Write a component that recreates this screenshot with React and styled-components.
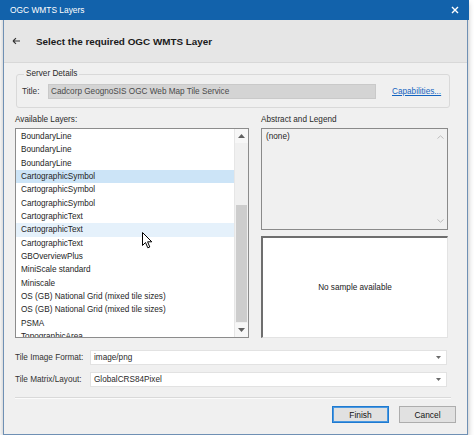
import React from "react";
import styled, { createGlobalStyle } from "styled-components";

const GlobalStyle = createGlobalStyle`
  html, body { margin: 0; padding: 0; background: #ffffff; }
  body { font-family: "Liberation Sans", Arial, sans-serif; font-size: 8.2px; color: #1b1b1b; }
  * { box-sizing: border-box; }
`;

const Window = styled.div`
  width: 465px;
  margin-left: 3px;
  border: 1px solid #6f90b4;
  border-top: none;
  background: #f0f0f0;
  box-shadow: 0 3px 6px rgba(0, 0, 0, 0.28);
  display: flex;
  flex-direction: column;
`;

const TitleBar = styled.div`
  height: 20px;
  margin: 0 -2px 0 -4px;
  background: #1262ab;
  color: #ffffff;
  display: flex;
  align-items: center;
  justify-content: space-between;
  padding: 0 10px 0 10px;
  font-size: 8.4px;
`;

const Header = styled.div`
  height: 43px;
  background: #e6e6e6;
  border-bottom: 1px solid #d8d8d8;
  display: flex;
  align-items: center;
  padding-left: 8px;
  gap: 8px;
`;

const HeaderText = styled.span`
  font-weight: bold;
  font-size: 9.9px;
  color: #1a1a1a;
`;

const Content = styled.div`
  padding: 6px 17px 11px 11px;
  display: flex;
  flex-direction: column;
`;

const GroupBox = styled.fieldset`
  margin: 0 0 0 1px;
  min-width: 0;
  border: 1px solid #d9d9d9;
  border-radius: 3px;
  padding: 5px 7px 8px 5px;
`;

const Legend = styled.legend`
  padding: 0 2px;
  margin-left: 2px;
  line-height: 10px;
  font-size: 8.2px;
  color: #2a2a2a;
`;

const TitleRow = styled.div`
  display: flex;
  align-items: center;
  height: 15px;
`;

const FieldLabel = styled.span`
  width: ${(p) => p.$w}px;
  flex: none;
  color: #333;
`;

const ReadOnlyInput = styled.div`
  width: 328px;
  height: 15px;
  background: #d4d4d4;
  border: 1px solid #c9c9c9;
  color: #4a4a4a;
  display: flex;
  align-items: center;
  padding-left: 2px;
`;

const Link = styled.a`
  margin-left: 16px;
  color: #1464c0;
  text-decoration: underline;
  cursor: pointer;
`;

const Columns = styled.div`
  display: grid;
  grid-template-columns: 234px 187px;
  column-gap: 12px;
  margin-top: 7px;
`;

const Column = styled.div`
  display: flex;
  flex-direction: column;
`;

const SectionLabel = styled.div`
  line-height: 10px;
  height: 10px;
  margin-bottom: 3px;
  color: #2a2a2a;
`;

const ListBox = styled.div`
  position: relative;
  height: 210px;
  border: 1px solid #8c8c8c;
  background: #ffffff;
  display: flex;
`;

const Rows = styled.div`
  flex: 1;
  overflow: hidden;
  padding-top: 1px;
`;

const Row = styled.div`
  height: 13.35px;
  line-height: 13.35px;
  padding-left: 5px;
  white-space: nowrap;
  color: #1e1e1e;
  background: ${(p) => (p.$state === "sel" ? "#cce4f7" : p.$state === "hover" ? "#e5f1fb" : "transparent")};
`;

const ScrollBar = styled.div`
  width: 14px;
  flex: none;
  background: #f0f0f0;
  border-left: 1px solid #e6e6e6;
  display: flex;
  flex-direction: column;
`;

const ScrollButton = styled.div`
  height: 14px;
  flex: none;
  background: #f7f7f7;
  display: flex;
  align-items: center;
  justify-content: center;
`;

const Track = styled.div`
  flex: 1;
  display: flex;
  flex-direction: column;
  justify-content: flex-end;
`;

const Thumb = styled.div`
  height: 117px;
  margin: 0 1px 1px 1px;
  background: #cdcdcd;
`;

const Cursor = styled.svg`
  position: absolute;
  left: 126px;
  top: 103px;
`;

const AbstractBox = styled.div`
  height: 102px;
  border: 1px solid #8a8a8a;
  background: #f0f0f0;
  display: flex;
`;

const AbstractText = styled.div`
  flex: 1;
  padding: 3px 0 0 4px;
  color: #1e1e1e;
`;

const FaintScroll = styled.div`
  width: 13px;
  display: flex;
  flex-direction: column;
  justify-content: space-between;
  align-items: center;
  padding: 6px 0 6px 0;
`;

const Preview = styled.div`
  margin-top: 6px;
  height: 102px;
  background: #ffffff;
  border-top: 2px solid #6e6e6e;
  border-left: 2px solid #6e6e6e;
  border-right: 1px solid #e3e3e3;
  border-bottom: 1px solid #e3e3e3;
  display: flex;
  align-items: center;
  justify-content: center;
  color: #1a1a1a;
`;

const FormRows = styled.div`
  margin-top: 12px;
  display: flex;
  flex-direction: column;
  gap: 7px;
`;

const FormRow = styled.div`
  display: flex;
  align-items: center;
  height: 15px;
`;

const Combo = styled.div`
  width: 357px;
  height: 15px;
  background: #ffffff;
  border: 1px solid #e2e2e2;
  display: flex;
  align-items: center;
  justify-content: space-between;
  padding: 0 5px 0 3px;
  color: #2a2a2a;
`;

const Separator = styled.div`
  margin-top: 10px;
  width: 436px;
  height: 2px;
  border-top: 1px solid #d9d9d9;
  border-bottom: 1px solid #fbfbfb;
`;

const ButtonRow = styled.div`
  margin-top: 7px;
  margin-right: -6px;
  display: flex;
  justify-content: flex-end;
  gap: 10px;
`;

const Button = styled.button`
  width: ${(p) => p.$w}px;
  height: 17px;
  padding: 0;
  font-family: inherit;
  font-size: 8.4px;
  color: #111;
  background: #e1e1e1;
  border: 1px solid ${(p) => (p.$focus ? "#1f7ad0" : "#adadad")};
  box-shadow: ${(p) => (p.$focus ? "inset 0 0 0 1px #4a98e0" : "none")};
`;

const TriUp = () => (
  <svg width="7" height="4" viewBox="0 0 7 4"><path d="M0 4 L3.5 0 L7 4 Z" fill="#606060" /></svg>
);
const TriDown = () => (
  <svg width="7" height="4" viewBox="0 0 7 4"><path d="M0 0 L3.5 4 L7 0 Z" fill="#606060" /></svg>
);
const SmallDrop = () => (
  <svg width="5" height="3" viewBox="0 0 5 3"><path d="M0 0 L2.5 3 L5 0 Z" fill="#6a6a6a" /></svg>
);
const ChevUp = () => (
  <svg width="7" height="4" viewBox="0 0 7 4"><path d="M0.5 3.5 L3.5 0.8 L6.5 3.5" stroke="#bdbdbd" fill="none" /></svg>
);
const ChevDown = () => (
  <svg width="7" height="4" viewBox="0 0 7 4"><path d="M0.5 0.5 L3.5 3.2 L6.5 0.5" stroke="#bdbdbd" fill="none" /></svg>
);

const layers = [
  ["BoundaryLine"],
  ["BoundaryLine"],
  ["BoundaryLine"],
  ["CartographicSymbol", "sel"],
  ["CartographicSymbol"],
  ["CartographicSymbol"],
  ["CartographicText"],
  ["CartographicText", "hover"],
  ["CartographicText"],
  ["GBOverviewPlus"],
  ["MiniScale standard"],
  ["Miniscale"],
  ["OS (GB) National Grid (mixed tile sizes)"],
  ["OS (GB) National Grid (mixed tile sizes)"],
  ["PSMA"],
  ["TopographicArea"],
];

export default function App() {
  return (
    <>
      <GlobalStyle />
      <Window>
        <TitleBar>
          <span>OGC WMTS Layers</span>
          <svg width="8" height="8" viewBox="0 0 8 8">
            <path d="M1 1 L7 7 M7 1 L1 7" stroke="#ffffff" strokeWidth="1.4" />
          </svg>
        </TitleBar>
        <Header>
          <svg width="16" height="8" viewBox="0 0 16 8">
            <path d="M1 4 H8 M1 4 L4 1.2 M1 4 L4 6.8" stroke="#333" strokeWidth="1.1" fill="none" />
          </svg>
          <HeaderText>Select the required OGC WMTS Layer</HeaderText>
        </Header>
        <Content>
          <GroupBox>
            <Legend>Server Details</Legend>
            <TitleRow>
              <FieldLabel $w={26}>Title:</FieldLabel>
              <ReadOnlyInput>Cadcorp GeognoSIS OGC Web Map Tile Service</ReadOnlyInput>
              <Link>Capabilities...</Link>
            </TitleRow>
          </GroupBox>
          <Columns>
            <Column>
              <SectionLabel>Available Layers:</SectionLabel>
              <ListBox>
                <Rows>
                  {layers.map(([name, state], i) => (
                    <Row key={i} $state={state}>{name}</Row>
                  ))}
                </Rows>
                <ScrollBar>
                  <ScrollButton><TriUp /></ScrollButton>
                  <Track><Thumb /></Track>
                  <ScrollButton><TriDown /></ScrollButton>
                </ScrollBar>
                <Cursor width="11" height="17" viewBox="0 0 11 17">
                  <path d="M0.5 0.5 L0.5 13.5 L3.5 10.5 L5.8 15.8 L7.8 15 L5.6 9.8 L9.8 9.8 Z" fill="#ffffff" stroke="#000" strokeWidth="1" strokeLinejoin="round" />
                </Cursor>
              </ListBox>
            </Column>
            <Column>
              <SectionLabel>Abstract and Legend</SectionLabel>
              <AbstractBox>
                <AbstractText>(none)</AbstractText>
                <FaintScroll>
                  <ChevUp />
                  <ChevDown />
                </FaintScroll>
              </AbstractBox>
              <Preview>No sample available</Preview>
            </Column>
          </Columns>
          <FormRows>
            <FormRow>
              <FieldLabel $w={75}>Tile Image Format:</FieldLabel>
              <Combo><span>image/png</span><SmallDrop /></Combo>
            </FormRow>
            <FormRow>
              <FieldLabel $w={75}>Tile Matrix/Layout:</FieldLabel>
              <Combo><span>GlobalCRS84Pixel</span><SmallDrop /></Combo>
            </FormRow>
          </FormRows>
          <Separator />
          <ButtonRow>
            <Button $w={57} $focus>Finish</Button>
            <Button $w={57}>Cancel</Button>
          </ButtonRow>
        </Content>
      </Window>
    </>
  );
}
